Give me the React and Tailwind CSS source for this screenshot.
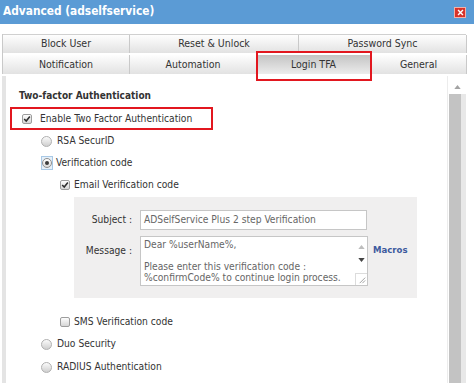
import React from "react";

const Check = ({ checked }) => (
  <span className="flex h-[10px] w-[10px] shrink-0 items-center justify-center rounded-[2px] border border-[#9d9d9d] bg-linear-to-b from-[#fdfdfd] to-[#d6d6d6]">
    {checked && (
      <svg viewBox="0 0 10 10" className="h-[8px] w-[8px]">
        <path d="M1.5 5 L4 7.6 L8.6 1.8" stroke="#2d2d2d" strokeWidth="1.9" fill="none" />
      </svg>
    )}
  </span>
);

const Radio = ({ checked }) =>
  checked ? (
    <span className="flex h-[14px] w-[12px] shrink-0 items-center justify-center border border-[#a9c9e6] bg-[#e6f0f9]">
      <span className="flex h-[10px] w-[10px] items-center justify-center rounded-full border border-[#8f8f8f] bg-linear-to-b from-white to-[#d9d9d9]">
        <span className="h-[4px] w-[4px] rounded-full bg-[#3a3a3a]" />
      </span>
    </span>
  ) : (
    <span className="h-[11px] w-[11px] shrink-0 rounded-full border border-[#b0b0b0] bg-linear-to-b from-[#fbfbfb] to-[#cfcfcf]" />
  );

const Tab = ({ label, active }) => (
  <div
    className={
      "flex items-center justify-center border-r border-[#c9c9c9] " +
      (active
        ? "bg-linear-to-b from-[#c4c4c4] to-[#ececec]"
        : "bg-linear-to-b from-[#fefefe] to-[#e2e2e2]")
    }
  >
    {label}
  </div>
);

export default function App() {
  return (
    <div className="h-[391px] w-[474px] overflow-hidden bg-white font-['DejaVu_Sans_Condensed','DejaVu_Sans',sans-serif] text-[10.2px] text-[#333]">
      {/* title bar */}
      <div className="flex h-[24px] items-center justify-between bg-[#5b9bd5] pl-[3px] pr-[8px]">
        <span className="text-[11.8px] font-bold text-white">Advanced (adselfservice)</span>
        <span className="flex h-[11px] w-[12px] items-center justify-center border border-[#f3b0a8] bg-[#d8322a]">
          <svg viewBox="0 0 10 10" className="h-[7px] w-[7px]">
            <path d="M1.5 1.5 L8.5 8.5 M8.5 1.5 L1.5 8.5" stroke="white" strokeWidth="2" />
          </svg>
        </span>
      </div>

      {/* tabs */}
      <div className="ml-[2px] mt-[10px] w-[464px] border-l border-[#c9c9c9] text-[10.5px]">
        <div className="grid h-[19px] grid-cols-[127px_169px_168px] border-t border-[#d0d0d0]">
          <Tab label="Block User" />
          <Tab label="Reset & Unlock" />
          <Tab label="Password Sync" />
        </div>
        <div className="mt-[2px] grid h-[19px] grid-cols-[127px_127px_114px_96px]">
          <Tab label="Notification" />
          <Tab label="Automation" />
          <div className="relative grid">
            <Tab label="Login TFA" active />
            <div className="absolute -bottom-[7px] -left-[1px] -right-[1px] -top-[4px] border-[2.5px] border-[#e2171f]" />
          </div>
          <Tab label="General" />
        </div>
      </div>

      {/* panel */}
      <div className="ml-[2px] mt-[2px] flex h-[307px] w-[465px]">
        <div className="w-[4px] bg-[#e4e4e4]" />
        <div className="flex-1">
          <div className="ml-[13px] mt-[12px] flex h-[14px] items-center text-[10px] font-bold">
            Two-factor Authentication
          </div>

          <div className="ml-[4px] mt-[5px] flex h-[23px] w-[203px] items-center gap-[8px] border-2 border-[#e2171f] pl-[10px]">
            <Check checked />
            <span>Enable Two Factor Authentication</span>
          </div>

          <div className="ml-[35px] flex h-[22px] items-center gap-[5px]">
            <Radio />
            <span>RSA SecurID</span>
          </div>
          <div className="ml-[35px] flex h-[22px] items-center gap-[3px]">
            <Radio checked />
            <span>Verification code</span>
          </div>
          <div className="ml-[54px] flex h-[22px] items-center gap-[4px]">
            <Check checked />
            <span>Email Verification code</span>
          </div>

          <div className="ml-[68px] mt-[1px] h-[101px] w-[343px] bg-[#f0efef] pt-[13px]">
            <div className="flex h-[20px] items-center">
              <span className="w-[60px] pr-[2px] text-right">Subject :</span>
              <div className="ml-[6px] flex h-[20px] w-[227px] items-center border border-[#c6c6c6] bg-white pl-[3px] text-[#666]">
                ADSelfService Plus 2 step Verification
              </div>
            </div>
            <div className="mt-[6px] flex items-start">
              <span className="mt-[7px] w-[60px] pr-[2px] text-right">Message :</span>
              <div className="ml-[6px] flex h-[50px] w-[228px] border border-[#c6c6c6] bg-white text-[#666]">
                <div className="flex-1 pl-[3px] pt-[2px] leading-[11px]">
                  <div>Dear %userName%,</div>
                  <div>&nbsp;</div>
                  <div>Please enter this verification code :</div>
                  <div>%confirmCode% to continue login process.</div>
                </div>
                <div className="flex w-[12px] flex-col items-center">
                  <svg viewBox="0 0 8 5" className="mt-[8px] h-[4px] w-[7px]">
                    <path d="M0 5 L4 0 L8 5 Z" fill="#bdbdbd" />
                  </svg>
                  <svg viewBox="0 0 8 5" className="mt-[9px] h-[4px] w-[7px]">
                    <path d="M0 0 L4 5 L8 0 Z" fill="#444" />
                  </svg>
                  <svg viewBox="0 0 12 12" className="mt-auto h-[12px] w-[12px] border-l border-t border-[#dcdcdc]">
                    <path d="M10 4 L4 10 M10 7 L7 10" stroke="#999" strokeWidth="1" />
                  </svg>
                </div>
              </div>
              <span className="ml-[5px] mt-[7px] text-[9.5px] font-bold text-[#3d5a9e]">Macros</span>
            </div>
          </div>

          <div className="ml-[54px] mt-[13px] flex h-[22px] items-center gap-[4px]">
            <Check />
            <span>SMS Verification code</span>
          </div>
          <div className="ml-[35px] flex h-[22px] items-center gap-[5px]">
            <Radio />
            <span>Duo Security</span>
          </div>
          <div className="ml-[35px] mt-[1px] flex h-[22px] items-center gap-[5px]">
            <Radio />
            <span>RADIUS Authentication</span>
          </div>
        </div>

        {/* scrollbar */}
        <div className="flex w-[20px] flex-col border-l border-[#ececec]">
          <div className="flex h-[18px] items-center justify-center">
            <svg viewBox="0 0 8 5" className="mt-[4px] h-[4px] w-[7px]">
              <path d="M0 5 L4 0 L8 5 Z" fill="#a3a3a3" />
            </svg>
          </div>
          <div className="flex flex-1">
            <div className="ml-[1px] w-[12px] bg-[#c3c3c3]" />
            <div className="w-[5px] bg-[#e8e8e8]" />
          </div>
        </div>
      </div>
    </div>
  );
}
